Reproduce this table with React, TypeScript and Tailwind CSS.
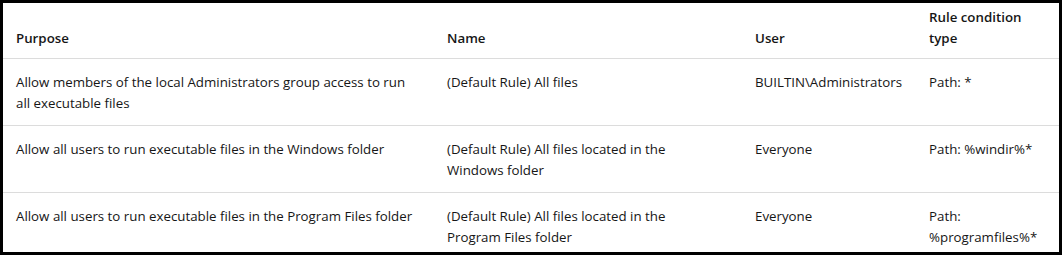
const rows = [
  {
    purpose: "Allow members of the local Administrators group access to run all executable files",
    name: "(Default Rule) All files",
    user: "BUILTIN\\Administrators",
    type: "Path: *",
  },
  {
    purpose: "Allow all users to run executable files in the Windows folder",
    name: "(Default Rule) All files located in the Windows folder",
    user: "Everyone",
    type: "Path: %windir%*",
  },
  {
    purpose: "Allow all users to run executable files in the Program Files folder",
    name: "(Default Rule) All files located in the Program Files folder",
    user: "Everyone",
    type: "Path: %programfiles%*",
  },
]

const cols = "grid grid-cols-[431px_308px_174px_1fr] pl-[13px]"

export default function App() {
  return (
    <div className="w-[1063px] h-[256px] bg-white">
      <div
        className="w-[1062px] h-[255px] border-[3px] border-black overflow-hidden text-[13.3px] leading-[21px] text-[#161616]"
        style={{ fontFamily: '"Open Sans", "Noto Sans", sans-serif' }}
      >
        <div className={`${cols} h-[56px] items-end pb-[9px] font-semibold border-b border-[#dcdcdc]`}>
          <div className="pr-[30px]">Purpose</div>
          <div className="pr-10">Name</div>
          <div className="pr-4">User</div>
          <div className="pr-4">Rule condition type</div>
        </div>
        {rows.map((r, i) => (
          <div key={i} className={`${cols} pt-[13px] pb-[11px] ${i < rows.length - 1 ? "border-b border-[#dcdcdc]" : ""}`}>
            <div className="pr-[30px]">{r.purpose}</div>
            <div className="pr-10">{r.name}</div>
            <div className="pr-4">{r.user}</div>
            <div className="pr-4">{r.type}</div>
          </div>
        ))}
      </div>
    </div>
  )
}
